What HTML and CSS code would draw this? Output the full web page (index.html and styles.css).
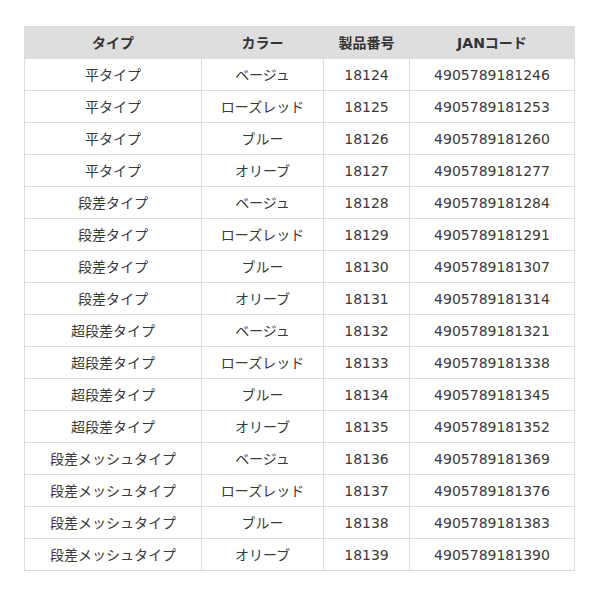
FILE: index.html
```html
<!DOCTYPE html>
<html lang="ja">
<head>
<meta charset="utf-8">
<link rel="stylesheet" href="styles.css">
</head>
<body>
<table class="spec">
<colgroup><col class="c1"><col class="c2"><col class="c3"><col class="c4"></colgroup>
<thead>
<tr><th>タイプ</th><th>カラー</th><th>製品番号</th><th>JANコード</th></tr>
</thead>
<tbody>
<tr><td>平タイプ</td><td>ベージュ</td><td>18124</td><td>4905789181246</td></tr>
<tr><td>平タイプ</td><td>ローズレッド</td><td>18125</td><td>4905789181253</td></tr>
<tr><td>平タイプ</td><td>ブルー</td><td>18126</td><td>4905789181260</td></tr>
<tr><td>平タイプ</td><td>オリーブ</td><td>18127</td><td>4905789181277</td></tr>
<tr><td>段差タイプ</td><td>ベージュ</td><td>18128</td><td>4905789181284</td></tr>
<tr><td>段差タイプ</td><td>ローズレッド</td><td>18129</td><td>4905789181291</td></tr>
<tr><td>段差タイプ</td><td>ブルー</td><td>18130</td><td>4905789181307</td></tr>
<tr><td>段差タイプ</td><td>オリーブ</td><td>18131</td><td>4905789181314</td></tr>
<tr><td>超段差タイプ</td><td>ベージュ</td><td>18132</td><td>4905789181321</td></tr>
<tr><td>超段差タイプ</td><td>ローズレッド</td><td>18133</td><td>4905789181338</td></tr>
<tr><td>超段差タイプ</td><td>ブルー</td><td>18134</td><td>4905789181345</td></tr>
<tr><td>超段差タイプ</td><td>オリーブ</td><td>18135</td><td>4905789181352</td></tr>
<tr><td>段差メッシュタイプ</td><td>ベージュ</td><td>18136</td><td>4905789181369</td></tr>
<tr><td>段差メッシュタイプ</td><td>ローズレッド</td><td>18137</td><td>4905789181376</td></tr>
<tr><td>段差メッシュタイプ</td><td>ブルー</td><td>18138</td><td>4905789181383</td></tr>
<tr><td>段差メッシュタイプ</td><td>オリーブ</td><td>18139</td><td>4905789181390</td></tr>
</tbody>
</table>
</body>
</html>
```
FILE: styles.css
```css
html, body {
  margin: 0;
  padding: 0;
  background: #fff;
}
body {
  padding: 26px 0 0 24px;
  font-family: "DejaVu Sans", "Noto Sans CJK JP", sans-serif;
  color: #3a3a3a;
}
.spec {
  border-collapse: collapse;
  table-layout: fixed;
  width: 550px;
  font-size: 14px;
}
.c1 { width: 177px; }
.c2 { width: 122px; }
.c3 { width: 86px; }
.c4 { width: 165px; }
.spec th,
.spec td {
  border: 1px solid #dcdcdc;
  height: 31px;
  padding: 0;
  text-align: center;
  vertical-align: middle;
  line-height: 20px;
}
.spec th {
  background: #dedede;
  font-weight: bold;
  color: #333;
}
```
